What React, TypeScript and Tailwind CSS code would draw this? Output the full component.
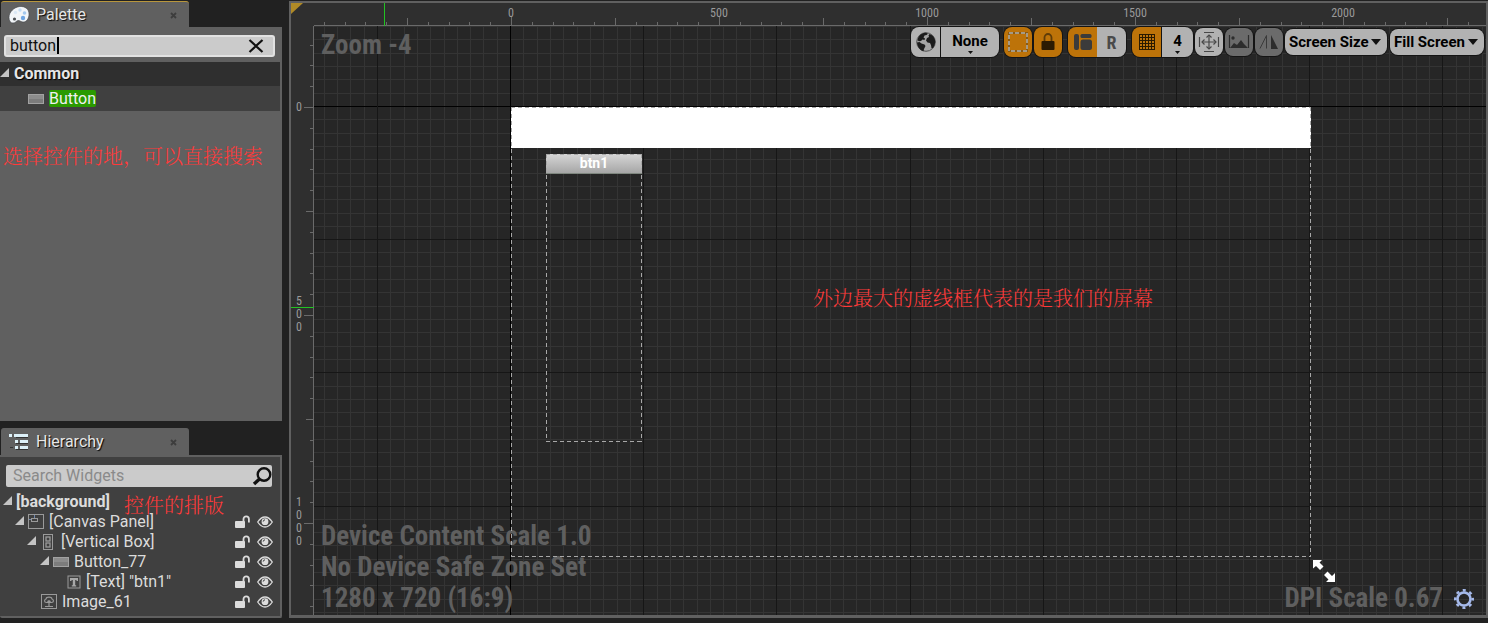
import React, { useState } from "react";

const UI = "font-['Roboto','Liberation_Sans',sans-serif]";
const CONDENSED = "font-['Roboto_Condensed','Roboto',sans-serif]";
const NOTE =
  "pointer-events-none absolute whitespace-nowrap font-['Noto_Serif_CJK_SC','Noto_Sans_CJK_SC',sans-serif] text-[20px] leading-5 font-light text-[#ff3a3a]";

/* ---------- rulers and grid ---------- */

const ORIGIN_X = 510;
const CANVAS_X = 314;
const CANVAS_Y = 26;
const CELL = 13.317;
const TICK = 20.8;

const range = (from: number, to: number) =>
  Array.from({ length: to - from + 1 }, (_, i) => from + i);

function Grid() {
  const xs = range(-14, 200).map((k) => ({ k, p: Math.floor(ORIGIN_X + 0.6 + k * CELL) - CANVAS_X }));
  const ys = range(-6, 120).map((k) => ({ k, p: Math.floor(106.5 + k * CELL) - CANVAS_Y }));
  const tone = (k: number) => (k === 0 ? "#000000" : k % 10 === 0 ? "#161616" : "#343434");
  const order = (a: { k: number }, b: { k: number }) =>
    Number(a.k % 10 === 0) - Number(b.k % 10 === 0);
  return (
    <svg aria-hidden="true" className="absolute inset-0 h-full w-full" shapeRendering="crispEdges">
      {xs.filter((l) => l.k % 10 !== 0).map((l) => (
        <rect key={l.k} x={l.p} y="0" width="1" height="100%" fill={tone(l.k)} />
      ))}
      {[...ys].sort(order).map((l) => (
        <rect key={l.k} x="0" y={l.p} width="100%" height="1" fill={tone(l.k)} />
      ))}
      {xs.filter((l) => l.k % 10 === 0).map((l) => (
        <rect key={l.k} x={l.p} y="0" width="1" height="100%" fill={tone(l.k)} />
      ))}
    </svg>
  );
}

function TopRuler() {
  return (
    <svg aria-hidden="true" className="block h-[23px] w-full bg-[#2f2f2f]">
      <g shapeRendering="crispEdges" fill="#6a6a6a">
        <rect x="23" y="22" width="100%" height="1" />
        {range(-9, 120).map((k) => {
          const x = Math.round(511 + k * TICK) - 291;
          const h = k % 10 === 0 ? 8 : k % 5 === 0 ? 7 : 3;
          return <rect key={k} x={x} y={22 - h} width="1" height={h} />;
        })}
        <rect x="93" y="0" width="1" height="23" fill="#22c322" />
      </g>
      <path d="M0 0h12L0 11z" fill="#b08a26" />
      {range(0, 4).map((k) => (
        <text
          key={k}
          x={220 + k * 208}
          y="14"
          textAnchor="middle"
          className="fill-[#9a9a9a] font-['Roboto_Condensed','Roboto',sans-serif] text-[12px]"
        >
          {k * 500}
        </text>
      ))}
    </svg>
  );
}

function SideRuler() {
  return (
    <div className="relative w-[23px] shrink-0 overflow-hidden bg-[#2f2f2f]">
      <svg aria-hidden="true" className="absolute inset-0 h-full w-full">
        <g shapeRendering="crispEdges" fill="#6a6a6a">
          <rect x="22" y="0" width="1" height="100%" />
          {range(-3, 80).map((k) => {
            const y = Math.round(107 + k * TICK) - 26;
            const w = k % 10 === 0 ? 9 : k % 5 === 0 ? 7 : 3;
            return <rect key={k} x={22 - w} y={y} width={w} height="1" />;
          })}
          <rect x="0" y="281" width="23" height="1" fill="#22c322" />
        </g>
        {range(0, 2).map((k) => {
          const first = k === 0 ? 85 : 78 + k * 201;
          return String(k * 500).split("").map((d, i) => (
            <text
              key={`${k}-${i}`}
              x="8"
              y={first + i * 13}
              textAnchor="middle"
              className="fill-[#9a9a9a] font-['Roboto_Condensed','Roboto',sans-serif] text-[12px]"
            >
              {d}
            </text>
          ));
        })}
      </svg>
    </div>
  );
}

function DashedOutline() {
  return (
    <svg aria-hidden="true" className="pointer-events-none absolute inset-0 h-full w-full overflow-hidden">
      <g stroke="#a8a8a8" strokeDasharray="4 3" strokeWidth="2" shapeRendering="crispEdges">
        <line x1="0" y1="0" x2="100%" y2="0" />
        <line x1="0" y1="0" x2="0" y2="100%" />
        <line x1="100%" y1="0" x2="100%" y2="100%" />
        <line x1="0" y1="100%" x2="100%" y2="100%" />
      </g>
    </svg>
  );
}

/* ---------- icons ---------- */

const PaletteIcon = () => (
  <svg width="22" height="20" viewBox="0 0 22 20" aria-hidden="true">
    <path
      d="M12 1.500C6 2 1 7 1 12.500c0 3.500 1.500 5.500 4 5.500 2.500 0 3-2 5-2.500 2-.4 3 2 6 1.500 3-.5 5-4 5-8 0-5-4-7.800-9-7.500z"
      fill="#f2f5f8"
      stroke="#3f4348"
      strokeWidth=".6"
    />
    <circle cx="6.500" cy="14" r="1.600" fill="#4c5054" />
    <circle cx="7.500" cy="7.500" r="1.700" fill="#dbe8f5" />
    <circle cx="12" cy="5" r="1.700" fill="#c3dcf4" />
    <circle cx="16.500" cy="8" r="1.800" fill="#a3c8ee" />
    <circle cx="15" cy="13" r="2.200" fill="#6fa5e2" />
  </svg>
);

const HierarchyIcon = () => (
  <svg width="22" height="18" viewBox="0 0 22 18" aria-hidden="true" shapeRendering="crispEdges">
    <g fill="#333">
      <path d="M2 14h3v1H2zM8 4h12v1H8zM8 10h12v1H8zM8 16h12v1H8z" />
    </g>
    <g fill="#dcf0f8">
      <path d="M1 1h3v3H1zM6 1h14v3H6zM7 7h3v3H7zM12 7h8v3h-8zM7 13h3v3H7zM12 13h8v3h-8z" />
    </g>
  </svg>
);

const TabClose = () => (
  <svg width="7" height="7" viewBox="0 0 7 7" aria-hidden="true">
    <path d="M1 1l5 5M6 1L1 6" stroke="#3d3d3d" strokeWidth="1.800" />
  </svg>
);

const Expander = () => (
  <svg width="9" height="9" viewBox="0 0 9 9" aria-hidden="true" className="block">
    <path d="M9 0v9H0z" fill="#c4c4c4" />
  </svg>
);

const ButtonIcon = () => (
  <svg width="16" height="12" viewBox="0 0 16 12" aria-hidden="true">
    <rect x=".5" y="1.500" width="15" height="9" fill="#8c8c8c" stroke="#a2a2a2" />
    <path d="M1 6h14v4H1z" fill="#7c7c7c" />
  </svg>
);

const CanvasIcon = () => (
  <svg width="16" height="16" viewBox="0 0 16 16" fill="none" stroke="#9a9a9a" aria-hidden="true">
    <rect x=".5" y=".5" width="15" height="14" />
    <rect x="3.500" y="4.500" width="6" height="3" />
    <path d="M1 5.500h2M6.500 1v3" stroke="#6e86ac" />
  </svg>
);

const VBoxIcon = () => (
  <svg width="16" height="16" viewBox="-2 0 16 16" fill="none" stroke="#9a9a9a" aria-hidden="true">
    <rect x="1.500" y=".5" width="9" height="15" />
    <rect x="4" y="3" width="4" height="4" strokeWidth="1.300" />
    <rect x="4" y="9" width="4" height="4" strokeWidth="1.300" />
  </svg>
);

const TextIcon = () => (
  <svg width="14" height="14" viewBox="0 0 14 14" aria-hidden="true">
    <rect x="1" y="1" width="12" height="12" fill="none" stroke="#9a9a9a" />
    <path d="M3 3h8v3h-1.200l-.6-1H8.200v5.300h1V11.500H4.800v-1.200h1V5H4.800l-.6 1H3z" fill="#a8a8a8" />
  </svg>
);

const ImageIcon = () => (
  <svg width="16" height="16" viewBox="0 0 16 16" fill="none" stroke="#9a9a9a" aria-hidden="true">
    <rect x=".5" y=".5" width="15" height="14" />
    <path
      d="M5.500 8.500C3 8.500 3 5.500 5 5c.5-2.500 5.500-2.500 6 0 2 .5 2 3.500-.5 3.500zM8 6v6M6.500 7L8 8.500 9.500 7M4 12.500h8"
      strokeWidth="1.200"
    />
  </svg>
);

const UnlockIcon = () => (
  <svg width="16" height="14" viewBox="0 0 16 14" aria-hidden="true">
    <rect x="0" y="6" width="10" height="7" rx="1" fill="#dcdcdc" />
    <path d="M8.500 7V4a2.700 2.700 0 0 1 5.400 0v3.500" fill="none" stroke="#dcdcdc" strokeWidth="1.800" />
  </svg>
);

const EyeIcon = () => (
  <svg width="16" height="12" viewBox="0 0 16 12" aria-hidden="true">
    <path
      d="M.7 6C3.500 1.800 5.800 1 8 1s4.500.8 7.300 5C12.500 10.200 10.200 11 8 11S3.500 10.200.7 6z"
      fill="none"
      stroke="#dcdcdc"
      strokeWidth="1.300"
    />
    <circle cx="8" cy="5.700" r="3.400" fill="#dcdcdc" />
    <path d="M6.200 5.600A1.900 1.900 0 0 1 8 3.800" fill="none" stroke="#404040" />
  </svg>
);

const GlobeIcon = () => (
  <svg width="22" height="22" viewBox="0 0 22 22" aria-hidden="true">
    <circle cx="11" cy="11" r="9.300" fill="#a4a4a4" stroke="#555" />
    <path
      d="M5 4C7 2.200 9 1.700 11 1.700l2 1-1.500 1.300-2 .5-1 2 1.500 1-.5 1.500-2-.5-1.500 1.500-2 .2-1.500-1C3 7 3.500 5.500 5 4zM2 11.500l2.500-.5 2 1.500 3 1 1 1.500-1.500 3-.5 2.200C5 19.500 2.500 16 2 11.500z"
      fill="#1c1c1c"
    />
    <path
      d="M14.500 3l2.500 1.200c2 1.500 3.300 4 3.300 6.800l-.8 3.500-1.500 2.500-1.500.2-.5-3-1-2.200-2.500-.5-1.500-2 1-2.500 2-1-.5-1.500z"
      fill="#1c1c1c"
    />
  </svg>
);

const OutlineIcon = () => (
  <svg width="22" height="22" viewBox="0 0 22 22" aria-hidden="true">
    <rect x="2" y="2" width="18" height="18" fill="none" stroke="#8a5a14" strokeWidth="2" />
    <rect x="2" y="2" width="18" height="18" fill="none" stroke="#a59a86" strokeWidth="2" strokeDasharray="4 2" />
  </svg>
);

const LockIcon = () => (
  <svg width="16" height="20" viewBox="0 0 16 20" aria-hidden="true">
    <path d="M4.500 10V5.500a3.500 3.500 0 0 1 7 0V10" fill="none" stroke="#5f3c08" strokeWidth="1.800" />
    <rect x="1.500" y="9" width="13" height="9" rx="1" fill="#2b1b02" />
  </svg>
);

const LayoutIcon = () => (
  <svg width="20" height="18" viewBox="0 0 20 18" fill="#3b3b3b" aria-hidden="true">
    <rect x="1" y="1" width="5" height="16" rx="2" />
    <rect x="7.500" y="1" width="11" height="4" rx="1.500" />
    <rect x="7.500" y="6.500" width="11.500" height="10.500" rx="2.500" />
  </svg>
);

const GridIcon = () => (
  <svg width="18" height="18" viewBox="0 0 18 18" aria-hidden="true" shapeRendering="crispEdges">
    <path
      d="M1.500 1v16M4.500 1v16M7.500 1v16M10.500 1v16M13.500 1v16M16.500 1v16M1 1.500h16M1 4.500h16M1 7.500h16M1 10.500h16M1 13.500h16M1 16.500h16"
      fill="none"
      stroke="#2a1a00"
    />
  </svg>
);

const LocalizeIcon = () => (
  <svg width="22" height="22" viewBox="0 0 22 22" fill="none" stroke="#484848" strokeWidth="1.200" aria-hidden="true">
    <path d="M6 1.500h10M6 20.500h10M1.500 6v10M20.500 6v10M11 4v14M4 11h14" />
    <path d="M8.500 6.500L11 4l2.500 2.500M8.500 15.500L11 18l2.500-2.500M6.500 8.500L4 11l2.500 2.500M15.500 8.500L18 11l-2.500 2.500" />
  </svg>
);

const PictureIcon = () => (
  <svg width="22" height="16" viewBox="0 0 22 16" aria-hidden="true">
    <path d="M1.500 1v13M20.500 1v13" stroke="#2d2d2d" strokeWidth="1.200" />
    <path d="M2 14l4-5 3 2 4-5 3 4 4 4z" fill="#2d2d2d" />
    <circle cx="5" cy="4" r="1.700" fill="#2d2d2d" />
  </svg>
);

const MirrorIcon = () => (
  <svg width="20" height="16" viewBox="0 0 20 16" aria-hidden="true">
    <path d="M1 14.500L7.500 1.500v13" fill="none" stroke="#3a3a3a" />
    <path d="M12 1v14h7z" fill="#2d2d2d" />
  </svg>
);

const CaretDown = ({ small = false }: { small?: boolean }) => (
  <svg width={small ? 5 : 10} height={small ? 3 : 6} viewBox="0 0 10 6" aria-hidden="true">
    <path d="M0 0h10L5 6z" fill="#111" />
  </svg>
);

const ResizeIcon = () => (
  <svg width="24" height="24" viewBox="0 0 24 24" aria-hidden="true">
    <path d="M1 1h9L7.500 3.500l4 4-3.500 3.500-4-4L1 9.500z" fill="#fff" />
    <path d="M23 23h-9l2.500-2.500-4.500-4.500 3.500-3.500 4.500 4.500L23 14z" fill="#fff" />
  </svg>
);

const GearIcon = () => (
  <svg width="22" height="22" viewBox="0 0 22 22" aria-hidden="true">
    <circle cx="11" cy="11" r="6.500" fill="none" stroke="#a5b9ea" strokeWidth="2.600" />
    <circle
      cx="11"
      cy="11"
      r="8.700"
      fill="none"
      stroke="#a5b9ea"
      strokeWidth="2.600"
      strokeDasharray="3 3.832"
      strokeDashoffset="1.500"
    />
  </svg>
);

/* ---------- left column ---------- */

function Tab({ icon, title, active = false }: { icon: React.ReactNode; title: string; active?: boolean }) {
  return (
    <div
      className={`ml-px flex h-[27px] w-[188px] items-center rounded-t-[3px] border-t bg-[#606060] pr-3 pl-[7px] ${
        active ? "border-[#b8963c]" : "border-[#606060]"
      }`}
    >
      {icon}
      <h2 className="ml-[6px] flex-1 text-[16px] leading-5 font-normal text-[#e6e6e6] [text-shadow:1px_1px_1px_#000]">
        {title}
      </h2>
      <button type="button" aria-label={`Close ${title}`}>
        <TabClose />
      </button>
    </div>
  );
}

function PalettePanel() {
  const [query, setQuery] = useState("button");
  return (
    <section className="flex flex-1 flex-col pt-px">
      <Tab icon={<PaletteIcon />} title="Palette" active />
      <div className="relative -mt-px flex-1 bg-[#606060] pt-2 pr-[2px]">
        <div className="relative mr-[5px] ml-1 flex h-[22px] items-center rounded-[3px] border-2 border-[#e2e2e2] bg-[#cbcbcb] pr-[9px]">
          <input
            aria-label="Search palette"
            value={query}
            onChange={(e) => setQuery(e.target.value)}
            className="h-[18px] min-w-0 flex-1 bg-transparent pl-1 text-[16px] leading-[18px] text-[#111] outline-none"
          />
          <span className="absolute top-0 left-[51px] h-[17px] w-[2px] bg-black" />
          <button type="button" aria-label="Clear search">
            <svg width="16" height="14" viewBox="0 0 16 14" aria-hidden="true">
              <path d="M1.500 1l13 12M14.500 1l-13 12" stroke="#111" strokeWidth="2.200" />
            </svg>
          </button>
        </div>
        <div className="mt-[5px] flex h-6 items-center bg-[#2f2f2f]">
          <button type="button" aria-label="Collapse Common" className="-mt-1">
            <Expander />
          </button>
          <h3 className="ml-[5px] text-[16px] leading-5 font-bold text-[#e6e6e6] [text-shadow:1px_1px_1px_#000]">
            Common
          </h3>
        </div>
        <div className="flex h-[25px] items-center bg-[#404040] pl-7">
          <ButtonIcon />
          <span className="ml-[5px] rounded-[2px] bg-[#2a9a00] text-[16px] leading-[17px] text-[#f0f0f0]">Button</span>
        </div>
        <p className={`${NOTE} top-[119px] left-[3px]`}>选择控件的地，可以直接搜索</p>
      </div>
    </section>
  );
}

type Row = { label: string; indent: string; icon: React.ReactNode; open: boolean };

const rows: Row[] = [
  { label: "[Canvas Panel]", indent: "pl-[13px]", icon: <CanvasIcon />, open: true },
  { label: "[Vertical Box]", indent: "pl-[25px]", icon: <VBoxIcon />, open: true },
  { label: "Button_77", indent: "pl-[38px]", icon: <ButtonIcon />, open: true },
  { label: '[Text] "btn1"', indent: "pl-[67px]", icon: <TextIcon />, open: false },
  { label: "Image_61", indent: "pl-[41px]", icon: <ImageIcon />, open: false },
];

function HierarchyPanel() {
  return (
    <section className="mt-[7px]">
      <Tab icon={<HierarchyIcon />} title="Hierarchy" />
      <div className="relative rounded-b-[2px] border-2 border-l-0 border-[#606060] bg-[#404040] pt-2 pb-1">
        <div className="mr-2 ml-[6px] flex h-[22px] items-center rounded-[2px] bg-[#cbcbcb]">
          <input
            aria-label="Search Widgets"
            placeholder="Search Widgets"
            className="h-5 min-w-0 flex-1 bg-transparent pl-[7px] text-[16px] leading-5 text-[#222] outline-none placeholder:text-[#8a8a8a]"
          />
          <button type="button" aria-label="Search">
            <svg width="20" height="20" viewBox="0 0 20 20" aria-hidden="true">
              <circle cx="12" cy="8.500" r="6.300" fill="none" stroke="#111" strokeWidth="2.400" />
              <path d="M7.500 13L2 18" stroke="#111" strokeWidth="3.400" />
            </svg>
          </button>
        </div>
        <ul className="mt-[5px] text-[16px] leading-5 text-[#dcdcdc]">
          <li className="flex h-5 items-center pl-[3px]">
            <button type="button" aria-label="Collapse [background]" className="-mt-1">
              <Expander />
            </button>
            <span className="ml-1 font-bold">[background]</span>
          </li>
          {rows.map((r) => (
            <li key={r.label} className={`flex h-5 items-center pr-[7px] ${r.indent}`}>
              {r.open && (
                <button type="button" aria-label={`Collapse ${r.label}`} className="-mt-1 mr-1 ml-[2px]">
                  <Expander />
                </button>
              )}
              {r.icon}
              <span className="ml-[5px] flex-1">{r.label}</span>
              <button type="button" aria-label={`Lock ${r.label}`} className="mr-[6px]">
                <UnlockIcon />
              </button>
              <button type="button" aria-label={`Toggle visibility of ${r.label}`}>
                <EyeIcon />
              </button>
            </li>
          ))}
        </ul>
        <p className={`${NOTE} top-[38px] left-[124px]`}>控件的排版</p>
      </div>
    </section>
  );
}

/* ---------- designer ---------- */

const CELL_BASE = "flex h-[30px] items-center justify-center";
const PILL = "overflow-hidden rounded-[8px] shadow-[0_0_0_1px_#141414]";

function DropDown({ label, options, width }: { label: string; options: string[]; width: string }) {
  return (
    <div className={`relative flex h-[26px] items-center bg-[#b2b2b2] ${PILL} ${width}`}>
      <select
        aria-label={label}
        className="h-full w-full appearance-none bg-transparent pl-1 text-[15px] font-bold text-black outline-none"
      >
        {options.map((o) => (
          <option key={o}>{o}</option>
        ))}
      </select>
      <span className="pointer-events-none absolute right-[6px]">
        <CaretDown />
      </span>
    </div>
  );
}

function Toolbar() {
  return (
    <div className="absolute top-px right-[2px] flex items-center gap-[2px]" role="toolbar" aria-label="Designer">
      <div className={`mr-[3px] flex gap-px bg-[#141414] ${PILL}`}>
        <button type="button" aria-label="Localization preview" className={`${CELL_BASE} w-[29px] bg-[#b2b2b2]`}>
          <GlobeIcon />
        </button>
        <button
          type="button"
          aria-haspopup="menu"
          className={`${CELL_BASE} w-[58px] flex-col bg-[#b2b2b2] text-[15px] leading-5 font-bold text-black`}
        >
          None
          <CaretDown small />
        </button>
      </div>
      <button type="button" aria-label="Show outlines" className={`${CELL_BASE} ${PILL} w-7 bg-[#bd7309]`}>
        <OutlineIcon />
      </button>
      <button type="button" aria-label="Respect locks" className={`${CELL_BASE} ${PILL} w-7 bg-[#bd7309]`}>
        <LockIcon />
      </button>
      <div className={`mx-1 flex ${PILL}`}>
        <button type="button" aria-label="Layout transform" className={`${CELL_BASE} w-[29px] bg-[#bd7309]`}>
          <LayoutIcon />
        </button>
        <button
          type="button"
          aria-label="Render transform"
          className={`${CELL_BASE} w-[29px] bg-[#b2b2b2] text-[18px] font-bold text-[#4a4a4a] ${CONDENSED}`}
        >
          R
        </button>
      </div>
      <div className={`flex gap-px bg-[#141414] ${PILL}`}>
        <button type="button" aria-label="Grid snapping" className={`${CELL_BASE} w-[29px] bg-[#bd7309]`}>
          <GridIcon />
        </button>
        <button
          type="button"
          aria-haspopup="menu"
          className={`${CELL_BASE} w-[31px] flex-col bg-[#b2b2b2] text-[15px] leading-5 font-bold text-black`}
        >
          4
          <CaretDown small />
        </button>
      </div>
      <button type="button" aria-label="Zoom to fit" className={`flex h-7 w-7 items-center justify-center bg-[#b2b2b2] ${PILL}`}>
        <LocalizeIcon />
      </button>
      <button type="button" aria-label="Swap aspect" className={`flex h-7 w-7 items-center justify-center bg-[#6b6b6b] ${PILL}`}>
        <PictureIcon />
      </button>
      <button type="button" aria-label="Mirror" className={`flex h-7 w-7 items-center justify-center bg-[#6b6b6b] ${PILL}`}>
        <MirrorIcon />
      </button>
      <DropDown label="Screen size" options={["Screen Size"]} width="w-[102px]" />
      <DropDown label="Fill mode" options={["Fill Screen"]} width="ml-px w-[94px]" />
    </div>
  );
}

const STATUS = `${CONDENSED} text-[27px] leading-[31px] font-bold text-[#5f5f5f]`;

function Designer() {
  return (
    <main className="mt-px flex min-w-0 flex-1 flex-col border-2 border-b-[3px] border-[#606060]">
      <TopRuler />
      <div className="flex flex-1">
        <SideRuler />
        <div className="relative min-w-0 flex-1 overflow-hidden bg-[#262626]">
          <Grid />
          <p className={`${STATUS} absolute top-1 left-[7px]`}>Zoom -4</p>
          <div className={`${STATUS} absolute bottom-px left-[7px]`}>
            <p>Device Content Scale 1.0</p>
            <p>No Device Safe Zone Set</p>
            <p>1280 x 720 (16:9)</p>
          </div>

          <div className="absolute top-[81px] left-[197px] h-[450px] w-[800px]">
            <div className="h-[41px] bg-white" />
            <DashedOutline />
            <div className="absolute top-[47px] left-[35px] h-[288px] w-[96px]">
              <button
                type="button"
                className="block h-5 w-full border-b border-[#7f877f] bg-linear-to-b from-[#d6d6d6] to-[#a6a6a6] text-[14px] leading-[19px] font-bold text-white"
              >
                btn1
              </button>
              <DashedOutline />
            </div>
            <p className={`${NOTE} top-[181px] left-[302px]`}>外边最大的虚线框代表的是我们的屏幕</p>
            <span className="absolute -right-[25px] -bottom-[26px]">
              <ResizeIcon />
            </span>
          </div>

          <Toolbar />

          <div className="absolute right-[11px] bottom-px flex items-center gap-[10px]">
            <p className={STATUS}>DPI Scale 0.67</p>
            <button type="button" aria-label="DPI settings">
              <GearIcon />
            </button>
          </div>
        </div>
      </div>
    </main>
  );
}

export default function App() {
  return (
    <div className={`${UI} flex min-h-screen gap-[7px] bg-[#212121] pb-[5px]`}>
      <aside className="flex w-[282px] shrink-0 flex-col">
        <PalettePanel />
        <HierarchyPanel />
      </aside>
      <Designer />
    </div>
  );
}
